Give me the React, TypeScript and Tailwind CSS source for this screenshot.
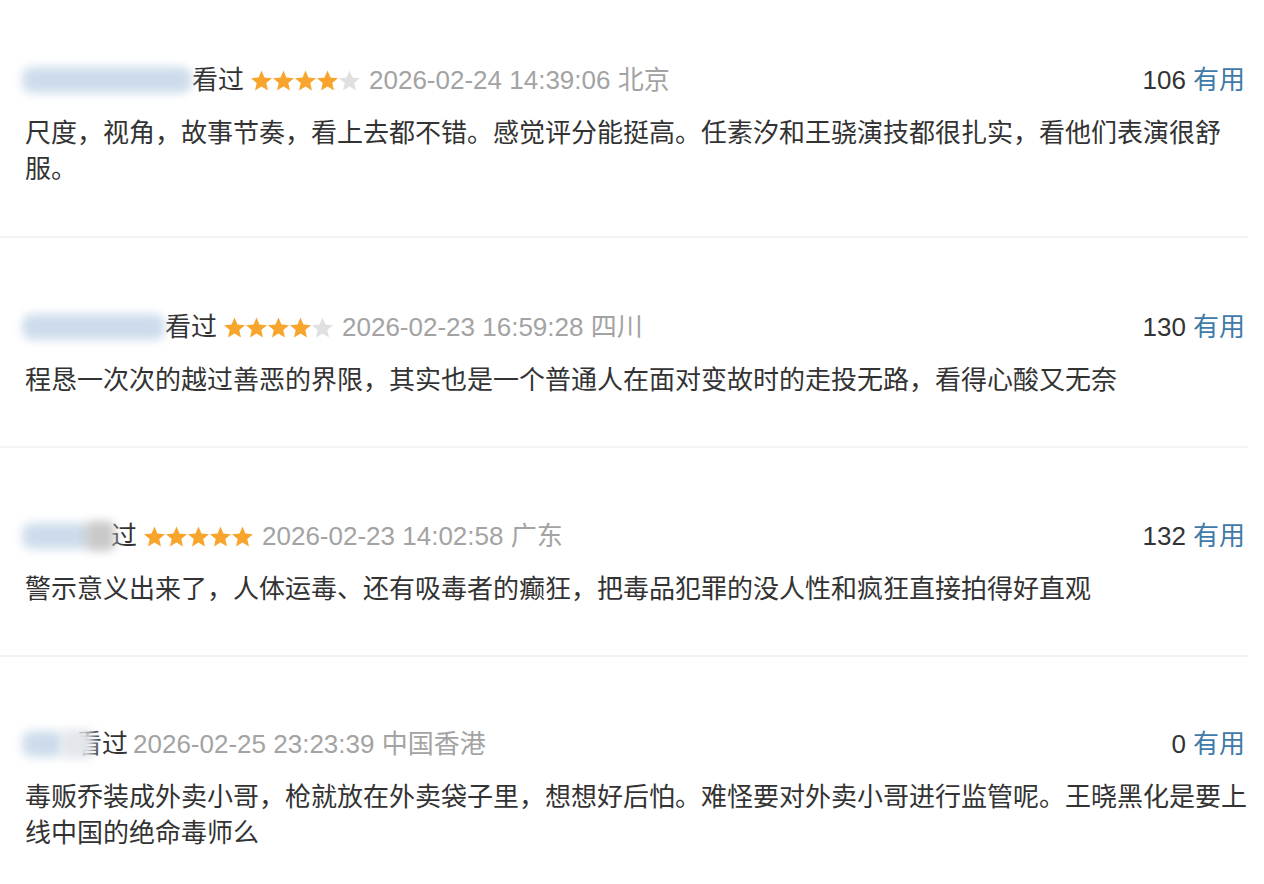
import React from "react";

type Review = {
  blob: number;
  hideKan: "none" | "full" | "half";
  stars: number | null;
  date: string;
  loc: string;
  useful: string;
  text: string;
  pad: string;
};

const reviews: Review[] = [
  {
    blob: 170,
    hideKan: "none",
    stars: 4,
    date: "2026-02-24 14:39:06",
    loc: "北京",
    useful: "106",
    text: "尺度，视角，故事节奏，看上去都不错。感觉评分能挺高。任素汐和王骁演技都很扎实，看他们表演很舒服。",
    pad: "pt-[62px] pb-[49px]",
  },
  {
    blob: 143,
    hideKan: "none",
    stars: 4,
    date: "2026-02-23 16:59:28",
    loc: "四川",
    useful: "130",
    text: "程恳一次次的越过善恶的界限，其实也是一个普通人在面对变故时的走投无路，看得心酸又无奈",
    pad: "pt-[71px] pb-[48px]",
  },
  {
    blob: 69,
    hideKan: "full",
    stars: 5,
    date: "2026-02-23 14:02:58",
    loc: "广东",
    useful: "132",
    text: "警示意义出来了，人体运毒、还有吸毒者的癫狂，把毒品犯罪的没人性和疯狂直接拍得好直观",
    pad: "pt-[70px] pb-[48px]",
  },
  {
    blob: 42,
    hideKan: "half",
    stars: null,
    date: "2026-02-25 23:23:39",
    loc: "中国香港",
    useful: "0",
    text: "毒贩乔装成外卖小哥，枪就放在外卖袋子里，想想好后怕。难怪要对外卖小哥进行监管呢。王晓黑化是要上线中国的绝命毒师么",
    pad: "pt-[69px] pb-[49px]",
  },
];

function Star({ on }: { on: boolean }) {
  return (
    <svg width="21" height="21" viewBox="2 1.5 20 20" className="shrink-0">
      <path
        d="M12 17.27L18.18 21l-1.64-7.03L22 9.24l-7.19-.61L12 2 9.19 8.63 2 9.24l5.46 4.73L5.82 21z"
        fill={on ? "#f7a52c" : "#e0e0e0"}
      />
    </svg>
  );
}

function Stars({ n }: { n: number }) {
  return (
    <span className="ml-[7px] mr-[9px] flex items-center gap-[1px]">
      {[0, 1, 2, 3, 4].map((i) => (
        <Star key={i} on={i < n} />
      ))}
    </span>
  );
}

function Item({ r }: { r: Review }) {
  return (
    <div className={`${r.pad} pl-[25px] border-b-2 border-[#f3f3f3]`}>
      <div className="flex h-[36px] items-center justify-between leading-[36px]">
        <div className="flex items-center">
          <span
            className="relative z-10 -ml-[3px] inline-block h-[26px] rounded-[10px] bg-[#cddcec] blur-[5px]"
            style={{ width: r.blob }}
          />
          {r.hideKan === "full" ? (
            <>
              <span className="relative z-10 -ml-[6px] inline-block h-[30px] w-[30px] rounded-[8px] bg-[#c9c9c9] blur-[5px]" />
              <span className="-ml-[4px] text-[#333]">过</span>
            </>
          ) : r.hideKan === "half" ? (
            <>
              <span className="relative z-10 -mr-[18px] -ml-[4px] inline-block h-[30px] w-[34px] rounded-[8px] bg-[#e3e7ec] blur-[5px]" />
              <span className="text-[#333]">看过</span>
            </>
          ) : (
            <span className="text-[#333]">看过</span>
          )}
          {r.stars !== null ? <Stars n={r.stars} /> : <span className="w-[5px]" />}
          <span className="text-[#a3a3a3]">
            {r.date} {r.loc}
          </span>
        </div>
        <div className="mr-[3px] flex items-center">
          <span className="text-[#333]">{r.useful}</span>
          <span className="ml-[7px] text-[#3f7aa8]">有用</span>
        </div>
      </div>
      <p className="mt-[17px] text-[#333] leading-[36px]">{r.text}</p>
    </div>
  );
}

export default function App() {
  return (
    <div
      className="h-[884px] w-[1264px] overflow-hidden bg-white text-[26px]"
      style={{ fontFamily: '"Liberation Sans", "Noto Sans CJK SC", sans-serif' }}
    >
      <div className="w-[1248px]">
        {reviews.map((r, i) => (
          <Item key={i} r={r} />
        ))}
      </div>
    </div>
  );
}
